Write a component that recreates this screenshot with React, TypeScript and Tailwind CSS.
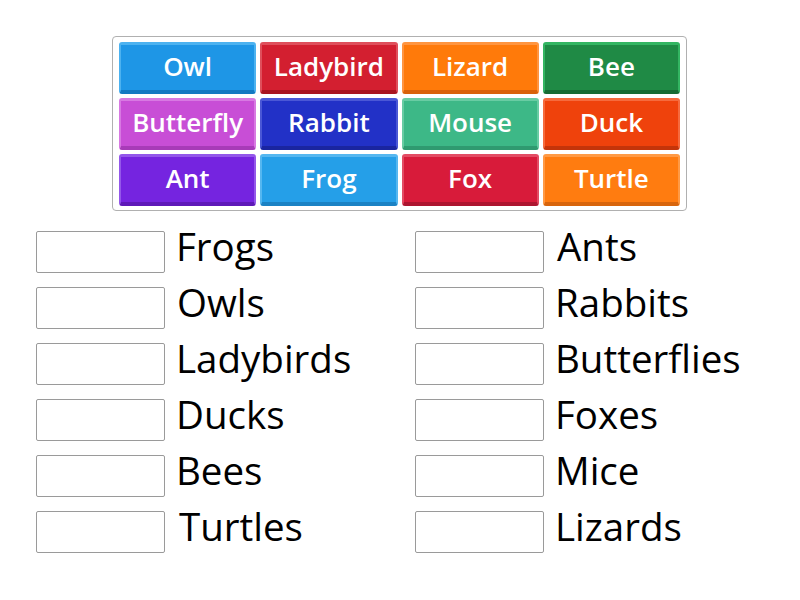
const tiles = [
  { label: 'Owl', cls: 'bg-[#1e96e6] border-[#4cb2f0] border-b-[#1479c2]' },
  { label: 'Ladybird', cls: 'bg-[#d31f30] border-[#df4f5b] border-b-[#a9141f]' },
  { label: 'Lizard', cls: 'bg-[#ff7a0a] border-[#ff9540] border-b-[#d9620a]' },
  { label: 'Bee', cls: 'bg-[#1f8a45] border-[#33b562] border-b-[#166b34]' },
  { label: 'Butterfly', cls: 'bg-[#c84ed6] border-[#d879e2] border-b-[#a83bb8]' },
  { label: 'Rabbit', cls: 'bg-[#2231c7] border-[#4a57d6] border-b-[#1a25a0]' },
  { label: 'Mouse', cls: 'bg-[#3db887] border-[#68cca3] border-b-[#2f9a70]' },
  { label: 'Duck', cls: 'bg-[#ef420c] border-[#f66a3d] border-b-[#c4340a]' },
  { label: 'Ant', cls: 'bg-[#7524e0] border-[#9457ea] border-b-[#5e19b8]' },
  { label: 'Frog', cls: 'bg-[#259fe8] border-[#55b7f0] border-b-[#1b82c4]' },
  { label: 'Fox', cls: 'bg-[#d81b3a] border-[#e34c64] border-b-[#ad1530]' },
  { label: 'Turtle', cls: 'bg-[#ff7c10] border-[#ff9a45] border-b-[#d8650c]' },
];

// each answer label sits a little off in the original, so keep its nudge
const rows = [
  [{ t: 'Frogs', x: 'ml-[11px]' }, { t: 'Ants', x: 'ml-[13px]' }],
  [{ t: 'Owls', x: 'ml-[12px]' }, { t: 'Rabbits', x: 'ml-[11px]' }],
  [{ t: 'Ladybirds', x: 'ml-[11px]' }, { t: 'Butterflies', x: 'ml-[11px]' }],
  [{ t: 'Ducks', x: 'ml-[11px]' }, { t: 'Foxes', x: 'ml-[11px]' }],
  [{ t: 'Bees', x: 'ml-[11px]' }, { t: 'Mice', x: 'ml-[11px]' }],
  [{ t: 'Turtles', x: 'ml-[14px]' }, { t: 'Lizards', x: 'ml-[11px]' }],
];

function Slot({ label, x }: { label: string; x: string }) {
  return (
    <div className="flex items-start h-[42px] mb-[14px]">
      <div className="w-[129px] h-[42px] border border-[#9a9a9a] rounded-[2px] bg-white shrink-0" />
      <span className={`${x} -mt-[6px] text-[38.5px] leading-[42px] text-black whitespace-nowrap`}>{label}</span>
    </div>
  );
}

export default function App() {
  return (
    <div className="w-[800px] h-[600px] bg-white font-['Open_Sans',sans-serif] overflow-hidden">
      <div className="ml-[112px] mt-[36px] w-[575px] h-[175px] border border-[#b0b0b0] rounded-[4px] px-[6px] pt-[5px] grid grid-cols-4 gap-x-[4px] gap-y-[4px] content-start">
        {tiles.map((t) => (
          <div
            key={t.label}
            className={`h-[52px] rounded-[3px] border-2 border-t-[3px] border-b-[4px] pb-[4px] flex items-center justify-center text-white text-[26px] font-semibold leading-none ${t.cls}`}
          >
            {t.label}
          </div>
        ))}
      </div>
      <div className="mt-[20px] ml-[36px] flex gap-[250px]">
        <div className="w-[129px]">
          {rows.map((r) => (
            <Slot key={r[0].t} label={r[0].t} x={r[0].x} />
          ))}
        </div>
        <div className="w-[129px]">
          {rows.map((r) => (
            <Slot key={r[1].t} label={r[1].t} x={r[1].x} />
          ))}
        </div>
      </div>
    </div>
  );
}
